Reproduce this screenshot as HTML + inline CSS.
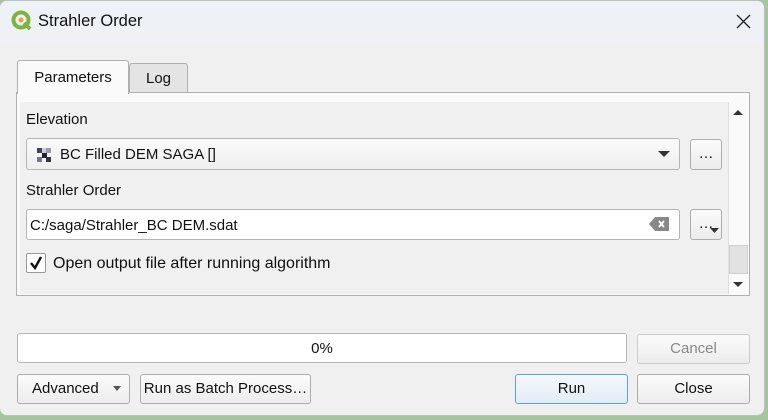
<!DOCTYPE html>
<html><head><style>
*{box-sizing:border-box;margin:0;padding:0}
body{width:768px;height:420px;background:#a7c4a0;font-family:"Liberation Sans",sans-serif;font-size:15px;color:#111;position:relative;overflow:hidden}
.win{position:absolute;left:-1px;top:0px;width:766px;height:416px;background:#f0f0f0;border-radius:8px;border:1px solid #b9c3b7;overflow:hidden}
.title{position:absolute;left:0;top:0;width:100%;height:42px;background:#eef2f6}
.abs{position:absolute}
.btn{position:absolute;background:linear-gradient(#fbfbfb,#ececec);border:1px solid #adadad;border-radius:3px;text-align:center;line-height:28px}
.field{position:absolute;border:1px solid #b5b5b5;border-radius:3px}
</style></head><body>
<div class="win">
<div class="title">
<svg class="abs" style="left:11px;top:9px" width="22" height="22" viewBox="0 0 22 22"><circle cx="10" cy="10" r="7.5" fill="none" stroke="#7cb342" stroke-width="4"/><path d="M13 13 L19 19" stroke="#7cb342" stroke-width="4"/><circle cx="10" cy="10" r="2.5" fill="#f0a030"/></svg>
<div class="abs" style="left:38px;top:11px;font-size:16.5px">Strahler Order</div>
<svg class="abs" style="left:736px;top:13px" width="15" height="15"><path d="M1 1L14 14M14 1L1 14" stroke="#222" stroke-width="1.3"/></svg>
</div>
<div class="abs" style="left:129px;top:62px;width:59px;height:30px;background:#e4e4e4;border:1px solid #b0b0b0;border-bottom:none;border-radius:3px 3px 0 0;text-align:center;line-height:30px">Log</div>
<div class="abs" style="left:16px;top:91px;width:734px;height:204px;border:1px solid #b0b0b0;background:#fafafa"></div>
<div class="abs" style="left:17px;top:59px;width:112px;height:34px;background:#fafafa;border:1px solid #b0b0b0;border-bottom:none;border-radius:3px 3px 0 0;text-align:center;line-height:34px">Parameters</div>
<div class="abs" style="left:20px;top:101px;width:708px;height:192px;background:#f0f0f0"></div>
<div class="abs" style="left:728px;top:101px;width:20px;height:192px;background:#fafafa;border-left:1px solid #e0e0e0"></div>
<div class="abs" style="left:729px;top:244px;width:19px;height:29px;background:#e2e2e2;border:1px solid #d0d0d0"></div>
<svg class="abs" style="left:732px;top:107px" width="12" height="8"><path d="M1 7L6 2L11 7Z" fill="#333"/></svg>
<svg class="abs" style="left:732px;top:280px" width="12" height="8"><path d="M1 1L6 6L11 1Z" fill="#333"/></svg>
<div class="abs" style="left:26px;top:110px">Elevation</div>
<div class="field" style="left:26px;top:137px;width:654px;height:32px;background:linear-gradient(#fafafa,#efefef)"></div>
<svg class="abs" style="left:37px;top:147px" width="14" height="14"><rect x="0" y="0" width="5" height="5" fill="#445"/><rect x="5" y="5" width="5" height="5" fill="#223"/><rect x="9" y="0" width="5" height="5" fill="#99a"/><rect x="0" y="9" width="5" height="5" fill="#778"/><rect x="9" y="9" width="5" height="5" fill="#334"/><rect x="5" y="0" width="4" height="5" fill="#ccd"/></svg>
<div class="abs" style="left:60px;top:145px">BC Filled DEM SAGA []</div>
<svg class="abs" style="left:658px;top:150px" width="12" height="7"><path d="M0 0H12L6 6Z" fill="#333"/></svg>
<div class="btn" style="left:690px;top:138px;width:32px;height:31px">…</div>
<div class="abs" style="left:26px;top:181px">Strahler Order</div>
<div class="field" style="left:26px;top:208px;width:654px;height:31px;background:#fff"></div>
<div class="abs" style="left:30px;top:216px">C:/saga/Strahler_BC DEM.sdat</div>
<svg class="abs" style="left:649px;top:216px" width="20" height="14"><path d="M0 7L6 0H20V14H6Z" fill="#888"/><path d="M10 4L15 10M15 4L10 10" stroke="#fff" stroke-width="1.8"/></svg>
<div class="btn" style="left:690px;top:208px;width:32px;height:31px">…</div>
<svg class="abs" style="left:710px;top:227px" width="9" height="5"><path d="M0 0H9L4.5 5Z" fill="#333"/></svg>
<div class="abs" style="left:26px;top:252px;width:20px;height:20px;background:#fff;border:1px solid #999;border-radius:2px"></div>
<svg class="abs" style="left:28px;top:254px" width="16" height="16"><path d="M3 8L7 13L13 2" stroke="#111" stroke-width="2.4" fill="none"/></svg>
<div class="abs" style="left:53px;top:254px;font-size:16px">Open output file after running algorithm</div>
<div class="field" style="left:17px;top:332px;width:610px;height:30px;background:#fff;text-align:center;line-height:29px">0%</div>
<div class="btn" style="left:637px;top:333px;width:113px;height:30px;color:#888;border-color:#ccc">Cancel</div>
<div class="btn" style="left:17px;top:373px;width:113px;height:30px;text-align:left;padding-left:14px">Advanced</div>
<svg class="abs" style="left:113px;top:385px" width="8" height="5"><path d="M0 0H8L4 5Z" fill="#555"/></svg>
<div class="btn" style="left:140px;top:373px;width:171px;height:30px">Run as Batch Process…</div>
<div class="btn" style="left:515px;top:373px;width:113px;height:30px;border-color:#5aa0e6;background:linear-gradient(#f4f8fc,#e3ecf5)">Run</div>
<div class="btn" style="left:637px;top:373px;width:113px;height:30px">Close</div>
</div>
</body></html>
